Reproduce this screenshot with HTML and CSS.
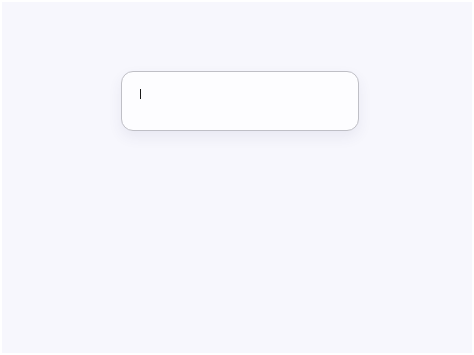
FILE: index.html
```html
<!DOCTYPE html>
<html>
<head>
<meta charset="utf-8">
<link rel="stylesheet" href="styles.css">
</head>
<body>
<div class="page">
  <div class="field">
    <span class="caret"></span>
  </div>
</div>
</body>
</html>
```
FILE: styles.css
```css
html, body {
  margin: 0;
  padding: 0;
  background: #ffffff;
  height: 100%;
}
.page {
  box-sizing: border-box;
  margin: 2px;
  height: calc(100% - 4px);
  background: #f7f7fd;
  padding-top: 69px;
  padding-left: 119px;
  font-family: "Liberation Sans", Arial, sans-serif;
}
.field {
  box-sizing: border-box;
  width: 238px;
  height: 60px;
  border: 1px solid #bfbfc6;
  border-radius: 12px;
  background: #fdfdff;
  box-shadow: 0 6px 14px rgba(60, 60, 110, 0.08);
  padding: 17px 0 0 18px;
}
.caret {
  display: block;
  width: 0;
  height: 10px;
  border-left: 1.5px solid #1a1a1a;
}
```
